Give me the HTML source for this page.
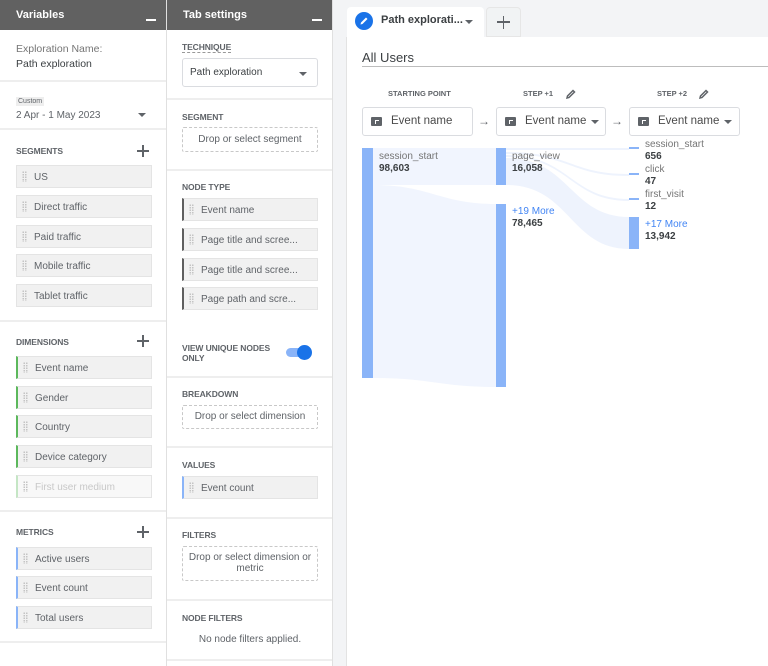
<!DOCTYPE html>
<html><head><meta charset="utf-8"><style>
*{margin:0;padding:0;box-sizing:border-box}
body{width:768px;height:666px;overflow:hidden;background:#f3f4f6;font-family:"Liberation Sans",Arial,sans-serif;color:#3c4043;position:relative}
.a{position:absolute}
.panel{position:absolute;top:0;height:666px;background:#fff;border-right:1px solid #e0e0e0}
.hdr{position:absolute;left:0;top:0;height:30px;width:100%;background:#616161;color:#fff;font-weight:bold;font-size:11px;padding:9px 0 0 16px}
.hdr .m{position:absolute;right:10px;width:10px;height:2px;background:#fff;top:19px}
.div{position:absolute;left:0;width:100%;height:2px;background:#eeeeee}
.lab{position:absolute;font-size:8.5px;font-weight:bold;color:#5f6368;letter-spacing:-0.1px}
.plus{position:absolute;width:12px;height:12px}
.plus:before{content:"";position:absolute;left:5px;top:0;width:1.6px;height:12px;background:#5f6368}
.plus:after{content:"";position:absolute;top:5px;left:0;height:1.6px;width:12px;background:#5f6368}
.chip{position:absolute;left:16px;width:136px;height:23px;background:#f1f1f1;border:1px solid #e4e4e4;font-size:10px;color:#5f6368;padding:6px 0 0 17px}
.chip:before{content:"";position:absolute;left:5px;top:5px;width:5px;height:11px;background-image:radial-gradient(circle,#c4c4c4 0.9px,transparent 1px);background-size:2.5px 2.5px}
.g{border-left:2px solid #5cb85c}.b{border-left:2px solid #8ab4f8}.k{border-left:2px solid #5f5f5f}
.dash{position:absolute;left:182px;width:136px;border:1px dashed #c8c8c8;font-size:10px;color:#5f6368;text-align:center;border-radius:2px}
.t{position:absolute;font-size:10px;color:#757575}
.n{position:absolute;font-size:10px;font-weight:bold;color:#3c4043}
.bl{position:absolute;font-size:10px;color:#4285f4}
.box{position:absolute;top:107px;height:29px;background:#fff;border:1px solid #dadce0;border-radius:3px;font-size:11.5px;color:#4a4a4a;padding:7px 0 0 28px}
.box:before{content:"";position:absolute;left:8px;top:9px;width:11px;height:9px;background:#5f6368;border-radius:1px}
.box:after{content:"";position:absolute;left:12px;top:12px;width:3px;height:3px;border-left:1.5px solid #fff;border-top:1.5px solid #fff}
.tri{position:absolute;width:0;height:0;border-left:4px solid transparent;border-right:4px solid transparent;border-top:4px solid #5f6368}
.ch{position:absolute;font-size:7.5px;font-weight:bold;color:#5f6368}
</style></head><body>

<div class="panel" style="left:0;width:167px">
 <div class="hdr">Variables<div class="m"></div></div>
 <div class="a" style="left:16px;top:43px;font-size:10.5px;color:#757575">Exploration Name:</div>
 <div class="a" style="left:16px;top:58px;font-size:10.5px;color:#3c4043">Path exploration</div>
 <div class="div" style="top:80px"></div>
 <div class="a" style="left:16px;top:97px;font-size:7px;background:#eee;padding:1px 2px;color:#5f6368">Custom</div>
 <div class="a" style="left:16px;top:110px;font-size:10px;color:#5f6368">2 Apr - 1 May 2023</div>
 <div class="tri" style="left:138px;top:113px"></div>
 <div class="div" style="top:128px"></div>
 <div class="lab" style="left:16px;top:146px">SEGMENTS</div><div class="plus" style="left:137px;top:145px"></div>
 <div class="chip" style="top:165px">US</div>
 <div class="chip" style="top:195px">Direct traffic</div>
 <div class="chip" style="top:225px">Paid traffic</div>
 <div class="chip" style="top:254px">Mobile traffic</div>
 <div class="chip" style="top:284px">Tablet traffic</div>
 <div class="div" style="top:320px"></div>
 <div class="lab" style="left:16px;top:337px">DIMENSIONS</div><div class="plus" style="left:137px;top:335px"></div>
 <div class="chip g" style="top:356px">Event name</div>
 <div class="chip g" style="top:386px">Gender</div>
 <div class="chip g" style="top:415px">Country</div>
 <div class="chip g" style="top:445px">Device category</div>
 <div class="chip" style="top:475px;border-left:2px solid #c5e6c5;background:#f8f8f8;color:#c8c8c8">First user medium</div>
 <div class="div" style="top:510px"></div>
 <div class="lab" style="left:16px;top:527px">METRICS</div><div class="plus" style="left:137px;top:526px"></div>
 <div class="chip b" style="top:547px">Active users</div>
 <div class="chip b" style="top:576px">Event count</div>
 <div class="chip b" style="top:606px">Total users</div>
 <div class="div" style="top:641px"></div>
</div>

<div class="panel" style="left:166px;width:167px;border-left:1px solid #e0e0e0">
 <div class="hdr">Tab settings<div class="m"></div></div>
</div>
<div class="lab" style="left:182px;top:42px;border-bottom:1px dashed #999">TECHNIQUE</div>
<div class="a" style="left:182px;top:58px;width:136px;height:29px;border:1px solid #dadce0;border-radius:3px;font-size:10px;padding:8px 0 0 7px;background:#fff">Path exploration</div>
<div class="tri" style="left:299px;top:72px"></div>
<div class="a" style="left:167px;top:98px;width:165px;height:2px;background:#eee"></div>
<div class="lab" style="left:182px;top:112px">SEGMENT</div>
<div class="dash" style="top:127px;height:25px;padding-top:6px">Drop or select segment</div>
<div class="a" style="left:167px;top:169px;width:165px;height:2px;background:#eee"></div>
<div class="lab" style="left:182px;top:182px">NODE TYPE</div>
<div class="chip k" style="left:182px;top:198px">Event name</div>
<div class="chip k" style="left:182px;top:228px">Page title and scree...</div>
<div class="chip k" style="left:182px;top:258px">Page title and scree...</div>
<div class="chip k" style="left:182px;top:287px">Page path and scre...</div>
<div class="lab" style="left:182px;top:343px;line-height:10px">VIEW UNIQUE NODES<br>ONLY</div>
<div class="a" style="left:286px;top:348px;width:24px;height:9px;border-radius:5px;background:#8ab4f8"></div>
<div class="a" style="left:297px;top:345px;width:15px;height:15px;border-radius:50%;background:#1a73e8"></div>
<div class="a" style="left:167px;top:376px;width:165px;height:2px;background:#eee"></div>
<div class="lab" style="left:182px;top:389px">BREAKDOWN</div>
<div class="dash" style="top:405px;height:24px;padding-top:5px">Drop or select dimension</div>
<div class="a" style="left:167px;top:446px;width:165px;height:2px;background:#eee"></div>
<div class="lab" style="left:182px;top:460px">VALUES</div>
<div class="chip b" style="left:182px;top:476px">Event count</div>
<div class="a" style="left:167px;top:517px;width:165px;height:2px;background:#eee"></div>
<div class="lab" style="left:182px;top:530px">FILTERS</div>
<div class="dash" style="top:546px;height:35px;padding-top:5px;line-height:11px">Drop or select dimension or<br>metric</div>
<div class="a" style="left:167px;top:599px;width:165px;height:2px;background:#eee"></div>
<div class="lab" style="left:182px;top:613px">NODE FILTERS</div>
<div class="a" style="left:182px;top:634px;width:136px;text-align:center;font-size:10px;color:#5f6368">No node filters applied.</div>
<div class="a" style="left:167px;top:659px;width:165px;height:2px;background:#eee"></div>

<!-- canvas -->
<div class="a" style="left:346px;top:37px;width:422px;height:629px;background:#fff;border-left:1px solid #e3e3e3"></div>
<div class="a" style="left:347px;top:7px;width:137px;height:31px;background:#fff;border-radius:4px 4px 0 0"></div>
<div class="a" style="left:355px;top:12px;width:18px;height:18px;border-radius:50%;background:#1a73e8"></div>
<svg class="a" style="left:355px;top:12px" width="18" height="18"><path d="M5.5 12.5 L6 10.5 L11 5.5 L12.5 7 L7.5 12 Z" fill="#fff"/></svg>
<div class="a" style="left:381px;top:14px;font-size:11px;font-weight:bold;color:#3c4043">Path explorati...</div>
<div class="tri" style="left:465px;top:20px"></div>
<div class="a" style="left:486px;top:7px;width:35px;height:30px;background:#f1f3f4;border:1px solid #e6e6e6;border-radius:4px 4px 0 0"></div>
<div class="a" style="left:497px;top:21px;width:13px;height:1.8px;background:#5f6368"></div>
<div class="a" style="left:502.6px;top:15.5px;width:1.8px;height:13px;background:#5f6368"></div>

<div class="a" style="left:362px;top:50px;font-size:13px;color:#3c4043">All Users</div>
<div class="a" style="left:362px;top:66px;width:406px;height:1px;background:#bdbdbd"></div>

<div class="ch" style="left:388px;top:89px">STARTING POINT</div>
<div class="ch" style="left:523px;top:89px">STEP +1</div>
<div class="ch" style="left:657px;top:89px">STEP +2</div>
<svg class="a" style="left:565px;top:88px" width="12" height="12"><path d="M2 10 L2.5 8 L8 2.5 L9.5 4 L4 9.5 Z" fill="none" stroke="#5f6368" stroke-width="1.5"/></svg>
<svg class="a" style="left:698px;top:88px" width="12" height="12"><path d="M2 10 L2.5 8 L8 2.5 L9.5 4 L4 9.5 Z" fill="none" stroke="#5f6368" stroke-width="1.5"/></svg>

<div class="box" style="left:362px;width:111px">Event name</div>
<div class="box" style="left:496px;width:110px">Event name</div>
<div class="box" style="left:629px;width:111px">Event name</div>
<div class="tri" style="left:591px;top:120px"></div>
<div class="tri" style="left:724px;top:120px"></div>
<div class="a" style="left:478px;top:114px;font-size:12px;color:#5f6368">→</div>
<div class="a" style="left:611px;top:114px;font-size:12px;color:#5f6368">→</div>

<svg class="a" style="left:0;top:0" width="768" height="666">
 <path d="M373 148 L496 148 L496 185 L373 185 Z" fill="#f1f5fe"/>
 <path d="M373 185 C430 185,440 204,496 204 L496 387 C440 387,430 378,373 378 Z" fill="#f1f5fe"/>
 <path d="M506 148 L629 148 L629 150 L506 150 Z" fill="#eef3fd"/>
 <path d="M506 152 C570 152,570 174,629 174 L629 176 C570 176,570 154,506 154 Z" fill="#eef3fd"/>
 <path d="M506 155 C570 155,570 199,629 199 L629 201 C570 201,570 157,506 157 Z" fill="#eef3fd"/>
 <path d="M506 158 C570 158,570 217,629 217 L629 249 C570 249,570 185,506 185 Z" fill="#eef3fd"/>
 <rect x="362" y="148" width="11" height="230" fill="#8ab4f8"/>
 <rect x="496" y="148" width="10" height="37" fill="#8ab4f8"/>
 <rect x="496" y="204" width="10" height="183" fill="#8ab4f8"/>
 <rect x="629" y="147" width="10" height="2" fill="#8ab4f8"/>
 <rect x="629" y="173" width="10" height="2" fill="#8ab4f8"/>
 <rect x="629" y="198" width="10" height="2" fill="#8ab4f8"/>
 <rect x="629" y="217" width="10" height="32" fill="#8ab4f8"/>
</svg>
<div class="t" style="left:379px;top:151px">session_start</div><div class="n" style="left:379px;top:163px">98,603</div>
<div class="t" style="left:512px;top:151px">page_view</div><div class="n" style="left:512px;top:163px">16,058</div>
<div class="bl" style="left:512px;top:206px">+19 More</div><div class="n" style="left:512px;top:218px">78,465</div>
<div class="t" style="left:645px;top:139px">session_start</div><div class="n" style="left:645px;top:151px">656</div>
<div class="t" style="left:645px;top:164px">click</div><div class="n" style="left:645px;top:176px">47</div>
<div class="t" style="left:645px;top:189px">first_visit</div><div class="n" style="left:645px;top:201px">12</div>
<div class="bl" style="left:645px;top:219px">+17 More</div><div class="n" style="left:645px;top:231px">13,942</div>
</body></html>
